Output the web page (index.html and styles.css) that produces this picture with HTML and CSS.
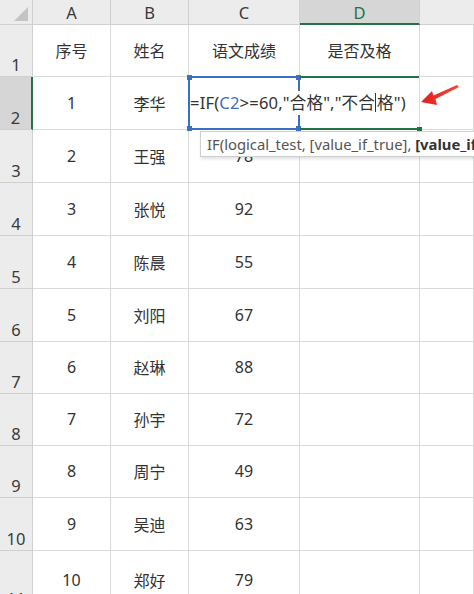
FILE: index.html
```html
<!DOCTYPE html>
<html>
<head>
<meta charset="utf-8">
<link rel="stylesheet" href="styles.css">
</head>
<body>
<div class="sheet">
  <div class="corner"><span class="tri"></span></div>
  <div class="ch">A</div>
  <div class="ch">B</div>
  <div class="ch">C</div>
  <div class="ch ch-active">D</div>
  <div class="ch ch-last"></div>

  <div class="rh">1</div>
  <div class="c">序号</div><div class="c">姓名</div><div class="c">语文成绩</div><div class="c">是否及格</div><div class="c"></div>

  <div class="rh rh-active">2</div>
  <div class="c">1</div><div class="c">李华</div><div class="c"></div><div class="c"></div><div class="c"></div>

  <div class="rh">3</div>
  <div class="c">2</div><div class="c">王强</div><div class="c">78</div><div class="c"></div><div class="c"></div>

  <div class="rh">4</div>
  <div class="c">3</div><div class="c">张悦</div><div class="c">92</div><div class="c"></div><div class="c"></div>

  <div class="rh">5</div>
  <div class="c">4</div><div class="c">陈晨</div><div class="c">55</div><div class="c"></div><div class="c"></div>

  <div class="rh">6</div>
  <div class="c">5</div><div class="c">刘阳</div><div class="c">67</div><div class="c"></div><div class="c"></div>

  <div class="rh">7</div>
  <div class="c">6</div><div class="c">赵琳</div><div class="c">88</div><div class="c"></div><div class="c"></div>

  <div class="rh">8</div>
  <div class="c">7</div><div class="c">孙宇</div><div class="c">72</div><div class="c"></div><div class="c"></div>

  <div class="rh">9</div>
  <div class="c">8</div><div class="c">周宁</div><div class="c">49</div><div class="c"></div><div class="c"></div>

  <div class="rh">10</div>
  <div class="c">9</div><div class="c">吴迪</div><div class="c">63</div><div class="c"></div><div class="c"></div>

  <div class="rh">11</div>
  <div class="c">10</div><div class="c">郑好</div><div class="c">79</div><div class="c"></div><div class="c"></div>

  <div class="sel-blue">
    <span class="h h-tl"></span><span class="h h-tr"></span><span class="h h-bl"></span><span class="h h-br"></span>
  </div>
  <div class="sel-green"><span class="gh"></span></div>

  <div class="formula">=IF(<span class="ref">C2</span>&gt;=60,"合格","不合<span class="caret"></span>格")</div>

  <div class="tip">IF(logical_test, [value_if_true], <b>[value_if_false]</b>)</div>

  <svg class="arrow" width="48" height="28" viewBox="0 0 48 28">
    <defs>
      <linearGradient id="ag" x1="0" y1="0" x2="1" y2="0">
        <stop offset="0" stop-color="#e5201a"/>
        <stop offset="1" stop-color="#f0483e"/>
      </linearGradient>
    </defs>
    <polygon points="2,19 13,8 14.5,12.5 38,2 40,4 16.5,16 18,22" fill="url(#ag)"/>
  </svg>
</div>
</body>
</html>
```

FILE: styles.css
```css
html, body {
  margin: 0;
  padding: 0;
  background: #ffffff;
  overflow: hidden;
}
.sheet {
  position: relative;
  width: 474px;
  height: 594px;
  display: grid;
  grid-template-columns: 33px 78px 78px 111px 120px 1fr;
  grid-template-rows: 25px 52px 53px 53px 53px 53px 53px 52px 52px 52px 53px 60px;
  font-family: "Noto Sans", "Noto Sans CJK SC", sans-serif;
  font-size: 16px;
  color: #333333;
  overflow: hidden;
}
.sheet > div {
  box-sizing: border-box;
}
.corner {
  background: #ececec;
  border-right: 1px solid #d0d0d0;
  border-bottom: 1px solid #d0d0d0;
  position: relative;
}
.tri {
  position: absolute;
  right: 4px;
  bottom: 3px;
  width: 0;
  height: 0;
  border-left: 14px solid transparent;
  border-bottom: 14px solid #c4c4c4;
}
.ch {
  background: #ececec;
  border-right: 1px solid #d0d0d0;
  border-bottom: 1px solid #d0d0d0;
  display: flex;
  align-items: center;
  justify-content: center;
  font-size: 16.5px;
  color: #3a3a3a;
  padding-top: 1px;
}
.ch-active {
  background: #d6d6d6;
  color: #217346;
  border-bottom: 2px solid #217346;
}
.ch-last {
  border-right: none;
}
.rh {
  background: #ececec;
  border-right: 1px solid #d0d0d0;
  border-bottom: 1px solid #d0d0d0;
  display: flex;
  align-items: flex-end;
  justify-content: center;
  font-size: 16.5px;
  color: #3a3a3a;
  line-height: 1;
  padding-bottom: 3px;
}
.rh-active {
  background: #d6d6d6;
  border-right: 2px solid #217346;
}
.c {
  border-right: 1px solid #dadada;
  border-bottom: 1px solid #dadada;
  display: flex;
  align-items: center;
  justify-content: center;
  padding-bottom: 1px;
}
.sel-blue {
  position: absolute;
  left: 188px;
  top: 76px;
  width: 112px;
  height: 54px;
  box-sizing: border-box;
  border: 2px solid #3c6ec4;
  z-index: 2;
}
.h {
  position: absolute;
  width: 5px;
  height: 5px;
  background: #3c6ec4;
}
.h-tl { left: -3px; top: -3px; }
.h-tr { right: -3px; top: -3px; }
.h-bl { left: -3px; bottom: -3px; }
.h-br { right: -3px; bottom: -3px; }
.sel-green {
  position: absolute;
  left: 300px;
  top: 76px;
  width: 119px;
  height: 54px;
  box-sizing: border-box;
  border-top: 2px solid #217346;
  border-bottom: 2px solid #217346;
  z-index: 2;
}
.gh {
  position: absolute;
  right: -3px;
  bottom: -4px;
  width: 5px;
  height: 5px;
  background: #217346;
}
.formula {
  position: absolute;
  left: 190px;
  top: 91px;
  height: 24px;
  line-height: 24px;
  padding-right: 3px;
  background: #ffffff;
  white-space: nowrap;
  font-size: 16.6px;
  letter-spacing: 0.15px;
  color: #333333;
  z-index: 3;
}
.ref {
  color: #3c6ec4;
}
.caret {
  display: inline-block;
  width: 1px;
  height: 19px;
  background: #333333;
  vertical-align: -3px;
  margin: 0 1px 0 0;
}
.tip {
  position: absolute;
  left: 200px;
  top: 131px;
  width: 330px;
  height: 26px;
  box-sizing: border-box;
  padding: 0 6px;
  line-height: 24px;
  background: #ffffff;
  border: 1px solid #cfcfcf;
  box-shadow: 1px 2px 3px rgba(0, 0, 0, 0.12);
  font-size: 14.8px;
  color: #555555;
  white-space: nowrap;
  z-index: 4;
}
.tip b {
  color: #333333;
}
.arrow {
  position: absolute;
  left: 419px;
  top: 83px;
  z-index: 5;
}
```
